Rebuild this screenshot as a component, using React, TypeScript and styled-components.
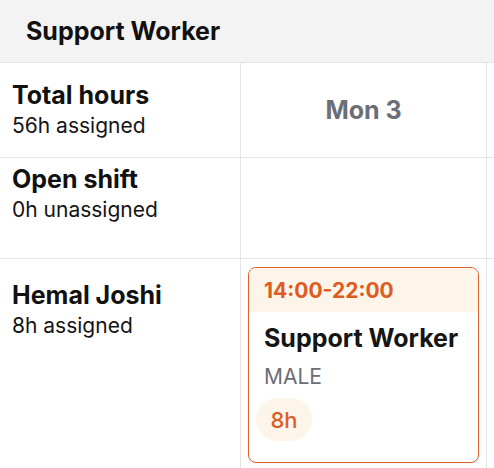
import React from 'react'
import styled, { createGlobalStyle } from 'styled-components'

const GlobalStyle = createGlobalStyle`
  body {
    margin: 0;
    background: #fff;
    font-family: Inter, "Noto Sans", sans-serif;
    color: #111;
  }
`

const Board = styled.div`
  width: 494px;
  height: 468px;
  overflow: hidden;
  background: #fff;
`

const GroupHeader = styled.div`
  height: 62px;
  display: flex;
  align-items: center;
  padding-left: 26px;
  background: #f3f3f3;
  border-bottom: 1px solid #e4e4e4;
  font-size: 25px;
  font-weight: 700;
  color: #111;
`

const Row = styled.div<{ $h: number }>`
  display: grid;
  grid-template-columns: 241px 246px 1fr;
  height: ${p => p.$h}px;
  border-bottom: 1px solid #e4e4e4;
`

const LabelCell = styled.div<{ $top?: number; $center?: boolean }>`
  display: flex;
  flex-direction: column;
  justify-content: ${p => (p.$center ? 'center' : 'flex-start')};
  padding: ${p => p.$top ?? 0}px 12px 0;
  border-right: 1px solid #e4e4e4;
`

const Title = styled.div`
  font-size: 25px;
  line-height: 30px;
  font-weight: 700;
  color: #111;
`

const Sub = styled.div`
  margin-top: 2px;
  font-size: 21px;
  line-height: 28px;
  color: #151515;
`

const DayCell = styled.div`
  display: flex;
  align-items: center;
  justify-content: center;
  border-right: 1px solid #e4e4e4;
  font-size: 25px;
  font-weight: 700;
  color: #6b6e76;
`

const SlotCell = styled.div`
  border-right: 1px solid #e4e4e4;
  padding: 8px 7px 0;
`

const Spare = styled.div``

const ShiftCard = styled.div`
  height: 196px;
  box-sizing: border-box;
  border: 1px solid #e0622a;
  border-radius: 8px;
  overflow: hidden;
  background: #fff;
  box-shadow: 0 1px 2px rgba(0, 0, 0, 0.06);
`

const CardTime = styled.div`
  height: 44px;
  display: flex;
  align-items: center;
  padding-left: 15px;
  background: #fdf4ea;
  color: #dc5c22;
  font-size: 21px;
  font-weight: 700;
`

const CardBody = styled.div`
  padding: 11px 15px 0;
`

const Role = styled.div`
  font-size: 25px;
  line-height: 30px;
  font-weight: 700;
  color: #151515;
`

const Gender = styled.div`
  margin-top: 11px;
  font-size: 21px;
  line-height: 26px;
  color: #6b6e76;
  text-transform: uppercase;
`

const HoursPill = styled.div`
  margin: 8px 0 0 -8px;
  width: 56px;
  height: 43px;
  border-radius: 22px;
  background: #fdf4ea;
  display: flex;
  align-items: center;
  justify-content: center;
  color: #dc5c22;
  font-size: 22px;
  font-weight: 500;
`

export default function App() {
  return (
    <Board>
      <GlobalStyle />
      <GroupHeader>Support Worker</GroupHeader>
      <Row $h={94}>
        <LabelCell $center>
          <Title>Total hours</Title>
          <Sub>56h assigned</Sub>
        </LabelCell>
        <DayCell>Mon 3</DayCell>
        <Spare />
      </Row>
      <Row $h={100}>
        <LabelCell $top={6}>
          <Title>Open shift</Title>
          <Sub>0h unassigned</Sub>
        </LabelCell>
        <SlotCell />
        <Spare />
      </Row>
      <Row $h={240}>
        <LabelCell $top={21}>
          <Title>Hemal Joshi</Title>
          <Sub>8h assigned</Sub>
        </LabelCell>
        <SlotCell>
          <ShiftCard>
            <CardTime>14:00-22:00</CardTime>
            <CardBody>
              <Role>Support Worker</Role>
              <Gender>Male</Gender>
              <HoursPill>8h</HoursPill>
            </CardBody>
          </ShiftCard>
        </SlotCell>
        <Spare />
      </Row>
    </Board>
  )
}
